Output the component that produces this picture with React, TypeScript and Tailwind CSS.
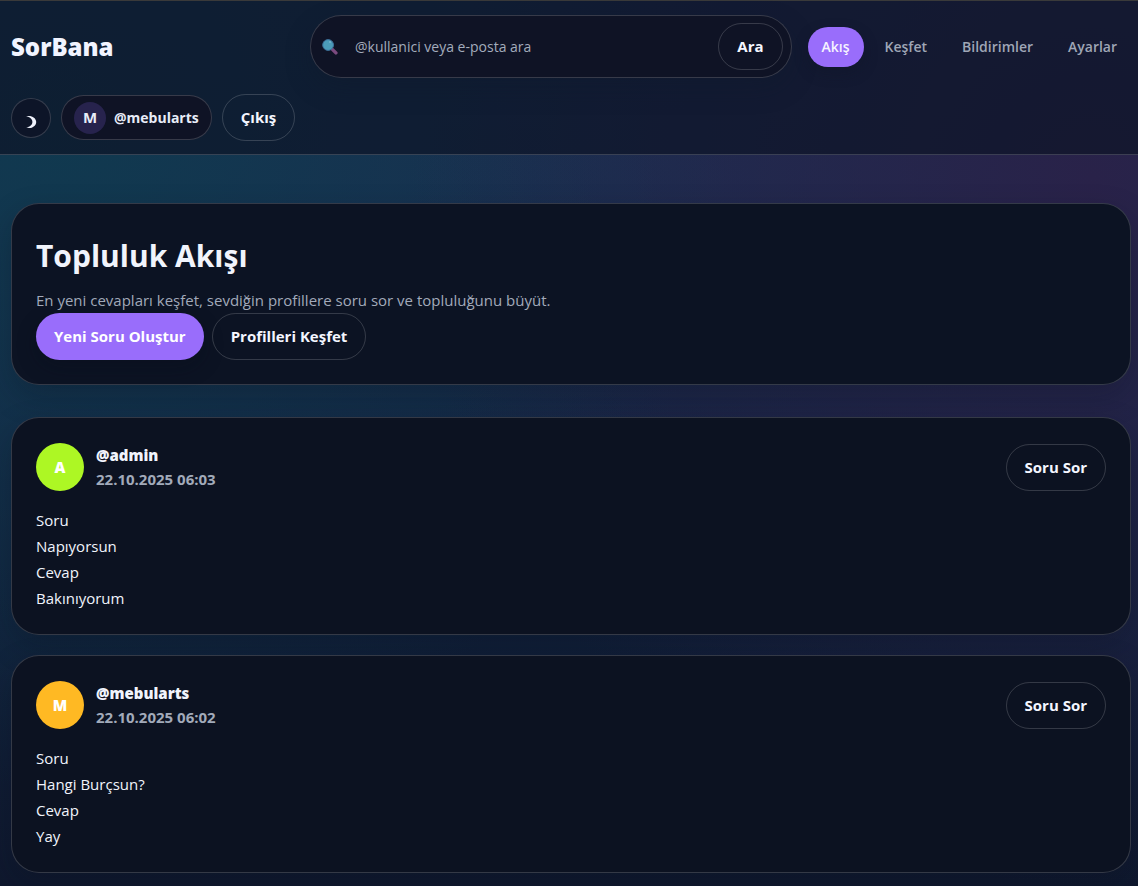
import React from "react";

const navItems = [
  { label: "Akış", active: true },
  { label: "Keşfet", active: false },
  { label: "Bildirimler", active: false },
  { label: "Ayarlar", active: false },
];

const posts = [
  {
    user: "admin",
    initial: "A",
    color: "bg-[#adf724]",
    date: "22.10.2025 06:03",
    question: "Napıyorsun",
    answer: "Bakınıyorum",
  },
  {
    user: "mebularts",
    initial: "M",
    color: "bg-[#ffb923]",
    date: "22.10.2025 06:02",
    question: "Hangi Burçsun?",
    answer: "Yay",
  },
];

const outline =
  "inline-flex h-[47px] items-center justify-center rounded-full border border-white/17 px-[18px] text-[15px] font-bold text-[#f4f6ff] whitespace-nowrap";

function SearchIcon() {
  return (
    <svg viewBox="0 0 16 16" className="size-4 shrink-0" aria-hidden="true">
      <path d="M10.6 10.6 L13.9 13.9" stroke="#7b4a7f" strokeWidth="3.4" strokeLinecap="round" />
      <circle cx="6.1" cy="6" r="5.4" fill="#4b9cb9" stroke="#3d719b" strokeWidth="1" />
      <circle cx="8" cy="3" r="0.8" fill="#8fc6d8" />
    </svg>
  );
}

function MoonIcon() {
  return (
    <svg viewBox="0 0 12 14" className="mt-2 h-[14px] w-3" aria-hidden="true">
      <path d="M1 1.3 C6 -0.2 11.2 2.6 11.2 7 C11.2 11.4 6 14.3 1.2 12.6 C5 12 7.4 9.8 7.4 7 C7.4 4 4.8 1.9 1 1.3Z" fill="#eef1fb" />
    </svg>
  );
}

function Header() {
  return (
    <header className="border-y border-t-[#3a3a3a] border-b-white/17 bg-[#0d1426]/70 pt-[14px] pr-[7px] pb-[13px] pl-[11px]">
      <div className="flex items-center">
        <a href="#" className="w-[299px] text-[24px] font-extrabold text-[#f1f4ff]">
          SorBana
        </a>
        <form
          className="flex h-[63px] min-w-0 flex-1 items-center rounded-full border border-white/17 bg-[#0f1325] pr-2 pl-[11px] shadow-[0_10px_24px_rgba(14,26,42,0.35)]"
          onSubmit={(e) => e.preventDefault()}
        >
          <SearchIcon />
          <input
            type="search"
            aria-label="Kullanıcı ara"
            placeholder="@kullanici veya e-posta ara"
            className="ml-[17px] min-w-0 flex-1 bg-transparent text-[14px] text-white outline-none placeholder:text-[#a3acbc]"
          />
          <button type="submit" className={outline}>
            Ara
          </button>
        </form>
        <nav className="ml-4 flex gap-[7px]">
          {navItems.map((n) => (
            <a
              key={n.label}
              href="#"
              className={
                n.active
                  ? "flex h-10 items-center rounded-full bg-[#996dfb] px-[14px] text-[14px] font-semibold text-[#f6f3ff] shadow-[0_6px_14px_rgba(14,20,38,0.35)]"
                  : "flex h-10 items-center rounded-full px-[14px] text-[14px] font-semibold text-[#9fa6b6]"
              }
            >
              {n.label}
            </a>
          ))}
        </nav>
      </div>
      <div className="mt-4 flex items-center gap-[10px]">
        <button
          type="button"
          aria-label="Tema"
          className="flex size-10 items-center justify-center rounded-full border border-white/17 bg-[#0d1528]"
        >
          <MoonIcon />
        </button>
        <a
          href="#"
          className="flex h-[45px] items-center rounded-full border border-white/17 bg-[#0f1325] px-3 text-[14px] font-bold text-[#e8ecf8]"
        >
          <span className="flex size-8 items-center justify-center rounded-full bg-[#27234d] text-[15px] font-bold">M</span>
          <span className="ml-2">@mebularts</span>
        </a>
        <button type="button" className={outline}>
          Çıkış
        </button>
      </div>
    </header>
  );
}

export default function App() {
  return (
    <div className="flex min-h-screen flex-col bg-[#0f1a2f] bg-[radial-gradient(ellipse_60%_80%_at_96%_20%,#292249_0%,transparent_100%),radial-gradient(ellipse_60%_75%_at_5%_14%,#10394f_0%,transparent_100%),linear-gradient(180deg,#1b3155_0%,#1a2d4f_25%,#11203a_70%,#0f182e_100%)] font-['Open_Sans','Noto_Sans',sans-serif] text-[15px] text-[#f1f4fc]">
      <Header />
      <main className="flex-1 pt-12 pr-[7px] pb-3 pl-[11px]">
        <section className="rounded-[28px] border border-white/17 bg-[#0c1323] px-6 pt-6 pb-6 shadow-[0_12px_30px_rgba(8,14,28,0.25)]">
          <h1 className="text-[30px] leading-[55px] font-bold">Topluluk Akışı</h1>
          <p className="mt-1 leading-[26px] text-[#a2aaba]">
            En yeni cevapları keşfet, sevdiğin profillere soru sor ve topluluğunu büyüt.
          </p>
          <div className="flex gap-2">
            <a
              href="#"
              className="inline-flex h-[47px] items-center rounded-full bg-[#996dfb] px-[18px] font-bold text-white shadow-[0_8px_20px_rgba(8,14,28,0.3)]"
            >
              Yeni Soru Oluştur
            </a>
            <a href="#" className={outline}>
              Profilleri Keşfet
            </a>
          </div>
        </section>
        <div className="mt-8 flex flex-col gap-5">
          {posts.map((p) => (
            <article
              key={p.user}
              className="rounded-[28px] border border-white/17 bg-[#0c1221] px-6 pt-6 pb-[23px] shadow-[0_12px_30px_rgba(8,14,28,0.25)]"
            >
              <div className="flex h-[50px] items-center">
                <span
                  className={`flex size-12 items-center justify-center rounded-full text-[15px] font-extrabold text-white ${p.color}`}
                >
                  {p.initial}
                </span>
                <div className="ml-3 flex-1 leading-[24px]">
                  <div className="font-extrabold">@{p.user}</div>
                  <div className="font-bold text-[#a2aaba]">{p.date}</div>
                </div>
                <button type="button" className={outline}>
                  Soru Sor
                </button>
              </div>
              <div className="mt-[15px] leading-[26px]">
                <p>Soru</p>
                <p>{p.question}</p>
                <p>Cevap</p>
                <p>{p.answer}</p>
              </div>
            </article>
          ))}
        </div>
      </main>
    </div>
  );
}
